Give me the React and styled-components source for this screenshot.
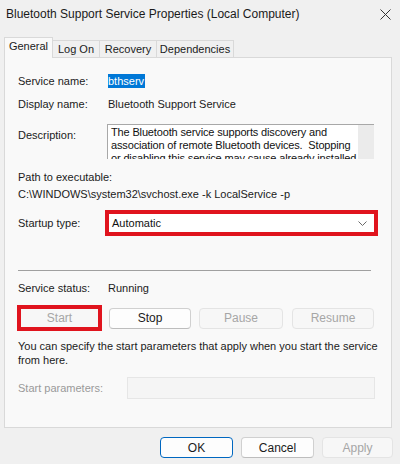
import React from "react";
import styled, { createGlobalStyle } from "styled-components";

const GlobalStyle = createGlobalStyle`
  html, body {
    margin: 0;
    padding: 0;
    background: #f0f0f0;
  }
  body {
    font-family: "Liberation Sans", Arial, sans-serif;
    font-size: 11px;
    color: #1b1b1b;
  }
`;

const Window = styled.div`
  width: 400px;
  height: 464px;
  display: flex;
  flex-direction: column;
  background: #f0f0f0;
  overflow: hidden;
`;

const TitleBar = styled.div`
  height: 28px;
  display: flex;
  align-items: center;
  justify-content: space-between;
  padding: 0 9px 0 6px;
  font-size: 12px;
  color: #1a1a1a;
`;

const CloseIcon = () => (
  <svg width="11" height="11" viewBox="0 0 11 11">
    <path d="M0.5 0.5 L10.5 10.5 M10.5 0.5 L0.5 10.5" stroke="#333" strokeWidth="1" fill="none" />
  </svg>
);

const TabStrip = styled.div`
  display: flex;
  align-items: flex-end;
  height: 29px;
  padding-left: 4px;
`;

const Tab = styled.div`
  width: ${(p) => p.$w}px;
  height: ${(p) => (p.$active ? "21px" : "17px")};
  padding-bottom: ${(p) => (p.$active ? "4px" : "0")};
  display: flex;
  align-items: center;
  justify-content: center;
  background: ${(p) => (p.$active ? "#f9f9f9" : "#f0f0f0")};
  border: 1px solid #d9d9d9;
  border-bottom: none;
  border-left: ${(p) => (p.$first ? "1px solid #d9d9d9" : "none")};
  margin-bottom: ${(p) => (p.$active ? "-1px" : "0")};
  position: relative;
  z-index: ${(p) => (p.$active ? 2 : 1)};
  color: #1b1b1b;
  box-sizing: border-box;
`;

const Panel = styled.div`
  margin: 0 8px 0 4px;
  height: 371px;
  box-sizing: border-box;
  background: #f9f9f9;
  border: 1px solid #d9d9d9;
  padding: 0 13px;
  display: flex;
  flex-direction: column;
`;

const Row = styled.div`
  display: flex;
  align-items: ${(p) => (p.$top ? "flex-start" : "center")};
  margin-top: ${(p) => p.$gap || 0}px;
`;

const Label = styled.div`
  width: ${(p) => p.$w || 90}px;
  flex-shrink: 0;
  line-height: 16px;
  margin-top: ${(p) => p.$offset || 0}px;
  color: ${(p) => (p.$disabled ? "#9a9a9a" : "#1b1b1b")};
`;

const Value = styled.div`
  line-height: 16px;
`;

const Selected = styled.span`
  background: #0078d7;
  color: #fff;
  padding: 1px 1px 1px 0;
  line-height: 13px;
`;

const DescBox = styled.div`
  margin-left: -1px;
  width: 267px;
  height: 35px;
  box-sizing: border-box;
  border-top: 1px solid #a8a8a8;
  border-left: 1px solid #a8a8a8;
  background: #fff;
  display: flex;
  overflow: hidden;
`;

const DescText = styled.div`
  flex: 1;
  padding: 1px 0 0 3px;
  line-height: 13px;
  color: #111;
  white-space: nowrap;
  letter-spacing: -0.15px;
  overflow: hidden;
`;

const Scroll = styled.div`
  width: 16px;
  flex-shrink: 0;
  background: #ebebeb;
`;

const Combo = styled.div`
  margin-left: -3px;
  width: 273px;
  height: 26px;
  box-sizing: border-box;
  border: 4px solid #e0141e;
  background: #fff;
  display: flex;
  align-items: center;
  justify-content: space-between;
  padding: 0 7px 0 3px;
  color: #111;
`;

const Chevron = () => (
  <svg width="9" height="5" viewBox="0 0 9 5">
    <path d="M0.5 0.5 L4.5 4.5 L8.5 0.5" stroke="#6a6a6a" strokeWidth="1" fill="none" />
  </svg>
);

const Separator = styled.div`
  margin-top: 34px;
  width: 353px;
  height: 1px;
  background: #a0a0a0;
`;

const ButtonRow = styled.div`
  display: flex;
  align-items: center;
  margin-top: 9px;
  margin-left: -1px;
`;

const Button = styled.div`
  width: ${(p) => p.$w}px;
  height: ${(p) => (p.$marked ? 26 : 21)}px;
  margin-right: ${(p) => p.$mr || 0}px;
  box-sizing: border-box;
  display: flex;
  align-items: center;
  justify-content: center;
  border-radius: ${(p) => (p.$marked ? 0 : 4)}px;
  border: ${(p) =>
    p.$marked
      ? "4px solid #e0141e"
      : p.$primary
      ? "1px solid #0067c0"
      : p.$disabled
      ? "1px solid #e4e4e4"
      : "1px solid #d0d0d0"};
  border-bottom-color: ${(p) => (p.$disabled || p.$marked || p.$primary ? "" : "#bdbdbd")};
  background: ${(p) => (p.$disabled ? "#f7f7f7" : "#fdfdfd")};
  color: ${(p) => (p.$disabled ? "#a6a6a6" : "#1b1b1b")};
  font-size: 12px;
`;

const Note = styled.div`
  margin-top: 9px;
  line-height: 13.5px;
  color: #1b1b1b;
`;

const ParamInput = styled.div`
  width: 248px;
  height: 22px;
  box-sizing: border-box;
  border: 1px solid #e6e6e6;
  background: #f5f5f5;
`;

const Footer = styled.div`
  display: flex;
  justify-content: flex-end;
  padding: 9px 7px 0 0;
  gap: 8px;
`;

export default function App() {
  return (
    <>
      <GlobalStyle />
      <Window>
        <TitleBar>
          <span>Bluetooth Support Service Properties (Local Computer)</span>
          <CloseIcon />
        </TitleBar>
        <TabStrip>
          <Tab $w={49} $active $first>General</Tab>
          <Tab $w={47}>Log On</Tab>
          <Tab $w={57}>Recovery</Tab>
          <Tab $w={77}>Dependencies</Tab>
        </TabStrip>
        <Panel>
          <Row $gap={15}>
            <Label>Service name:</Label>
            <Value>
              <Selected>bthserv</Selected>
            </Value>
          </Row>
          <Row $gap={7}>
            <Label>Display name:</Label>
            <Value>Bluetooth Support Service</Value>
          </Row>
          <Row $gap={12} $top>
            <Label $offset={3}>Description:</Label>
            <DescBox>
              <DescText>
                The Bluetooth service supports discovery and
                <br />
                association of remote Bluetooth devices.&nbsp; Stopping
                <br />
                or disabling this service may cause already installed
              </DescText>
              <Scroll />
            </DescBox>
          </Row>
          <Row $gap={10}>
            <Label $w={200}>Path to executable:</Label>
          </Row>
          <Row $gap={1}>
            <Value>C:\WINDOWS\system32\svchost.exe -k LocalService -p</Value>
          </Row>
          <Row $gap={8}>
            <Label>Startup type:</Label>
            <Combo>
              <span>Automatic</span>
              <Chevron />
            </Combo>
          </Row>
          <Separator />
          <Row $gap={9}>
            <Label>Service status:</Label>
            <Value>Running</Value>
          </Row>
          <ButtonRow>
            <Button $w={85} $mr={7} $marked $disabled>Start</Button>
            <Button $w={82} $mr={8}>Stop</Button>
            <Button $w={84} $mr={9} $disabled>Pause</Button>
            <Button $w={82} $disabled>Resume</Button>
          </ButtonRow>
          <Note>
            You can specify the start parameters that apply when you start the service
            <br />
            from here.
          </Note>
          <Row $gap={10}>
            <Label $w={109} $disabled>Start parameters:</Label>
            <ParamInput />
          </Row>
        </Panel>
        <Footer>
          <Button $w={73} $primary>OK</Button>
          <Button $w={73}>Cancel</Button>
          <Button $w={71} $disabled>Apply</Button>
        </Footer>
      </Window>
    </>
  );
}
